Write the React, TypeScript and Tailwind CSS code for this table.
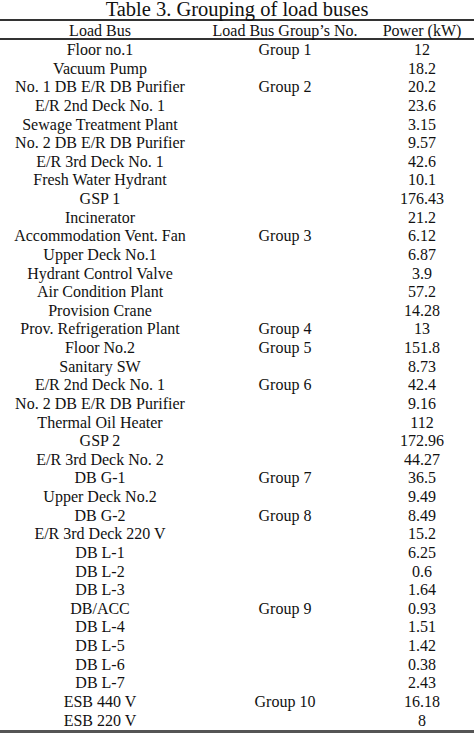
import React from "react";

type Row = [string, string, string];

const rows: Row[] = [
  ["Floor no.1", "Group 1", "12"],
  ["Vacuum Pump", "", "18.2"],
  ["No. 1 DB E/R DB Purifier", "Group 2", "20.2"],
  ["E/R 2nd Deck No. 1", "", "23.6"],
  ["Sewage Treatment Plant", "", "3.15"],
  ["No. 2 DB E/R DB Purifier", "", "9.57"],
  ["E/R 3rd Deck No. 1", "", "42.6"],
  ["Fresh Water Hydrant", "", "10.1"],
  ["GSP 1", "", "176.43"],
  ["Incinerator", "", "21.2"],
  ["Accommodation Vent. Fan", "Group 3", "6.12"],
  ["Upper Deck No.1", "", "6.87"],
  ["Hydrant Control Valve", "", "3.9"],
  ["Air Condition Plant", "", "57.2"],
  ["Provision Crane", "", "14.28"],
  ["Prov. Refrigeration Plant", "Group 4", "13"],
  ["Floor No.2", "Group 5", "151.8"],
  ["Sanitary SW", "", "8.73"],
  ["E/R 2nd Deck No. 1", "Group 6", "42.4"],
  ["No. 2 DB E/R DB Purifier", "", "9.16"],
  ["Thermal Oil Heater", "", "112"],
  ["GSP 2", "", "172.96"],
  ["E/R 3rd Deck No. 2", "", "44.27"],
  ["DB G-1", "Group 7", "36.5"],
  ["Upper Deck No.2", "", "9.49"],
  ["DB G-2", "Group 8", "8.49"],
  ["E/R 3rd Deck 220 V", "", "15.2"],
  ["DB L-1", "", "6.25"],
  ["DB L-2", "", "0.6"],
  ["DB L-3", "", "1.64"],
  ["DB/ACC", "Group 9", "0.93"],
  ["DB L-4", "", "1.51"],
  ["DB L-5", "", "1.42"],
  ["DB L-6", "", "0.38"],
  ["DB L-7", "", "2.43"],
  ["ESB 440 V", "Group 10", "16.18"],
  ["ESB 220 V", "", "8"],
];

const App: React.FC = () => {
  return (
    <div className="w-[474px] h-[735px] bg-white text-[#111] font-['Liberation_Serif','Times_New_Roman',serif] overflow-hidden">
      <div className="h-[19px] text-center text-[20.5px] leading-[19px] whitespace-nowrap">
        Table 3. Grouping of load buses
      </div>
      <div className="h-[2px] bg-[#333]" />
      <div className="grid grid-cols-[200px_170px_104px] h-[17px] text-[16px] leading-[17px] pt-[1px] text-center whitespace-nowrap">
        <div>Load Bus</div>
        <div>Load Bus Group’s No.</div>
        <div>Power (kW)</div>
      </div>
      <div className="h-[2px] bg-[#333]" />
      <div className="pt-[1px] text-[16px] leading-[18.64px]">
        {rows.map((r, i) => (
          <div
            key={i}
            className="grid grid-cols-[200px_170px_104px] h-[18.64px] text-center whitespace-nowrap"
          >
            <div>{r[0]}</div>
            <div>{r[1]}</div>
            <div>{r[2]}</div>
          </div>
        ))}
      </div>
      <div className="h-[3px] bg-[#555]" />
    </div>
  );
};

export default App;
